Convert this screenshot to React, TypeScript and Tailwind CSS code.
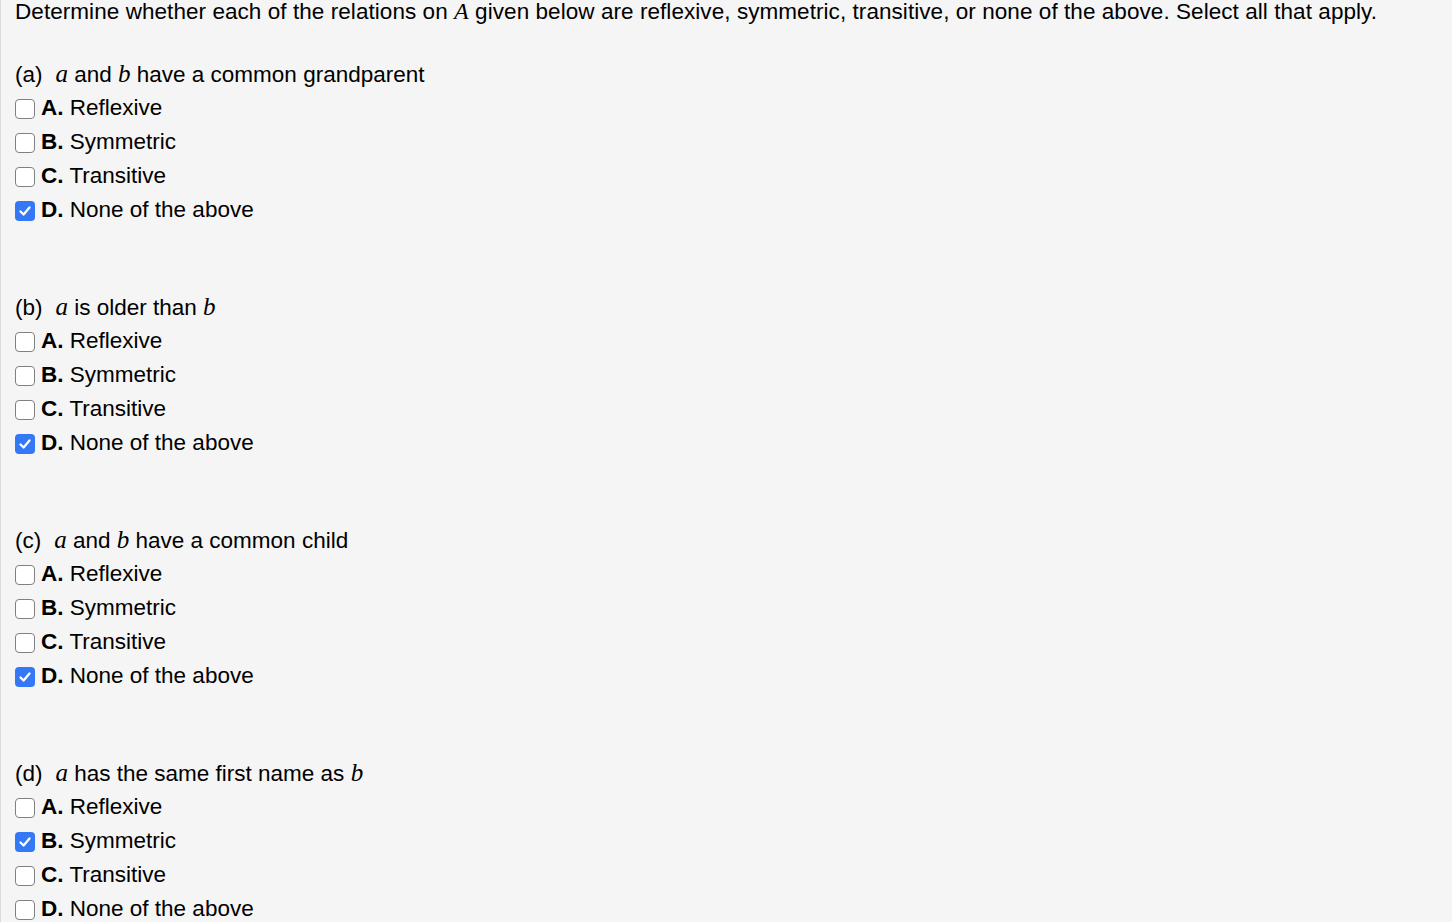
import React from 'react'

type Part = { q: string; rest: React.ReactNode; checked: string[] }

function M({ children, size = 'text-[25px]' }: { children: React.ReactNode; size?: string }) {
  return (
    <span className={`italic leading-none ${size}`} style={{ fontFamily: '"Liberation Serif", "DejaVu Serif", serif' }}>
      {children}
    </span>
  )
}

function Box({ checked }: { checked: boolean }) {
  if (checked) {
    return (
      <span className="w-[20px] h-[20px] mt-[2px] rounded-[4px] bg-[#3478f6] flex items-center justify-center shrink-0">
        <svg width="14" height="14" viewBox="0 0 14 14" fill="none">
          <path d="M2.5 7.5 L5.6 10.5 L11.5 3.5" stroke="white" strokeWidth="2.3" strokeLinecap="round" strokeLinejoin="round" />
        </svg>
      </span>
    )
  }
  return <span className="w-[20px] h-[20px] mt-[2px] rounded-[4px] bg-white border border-[#808080] shrink-0" />
}

const options = [
  ['A', 'Reflexive'],
  ['B', 'Symmetric'],
  ['C', 'Transitive'],
  ['D', 'None of the above'],
]

const parts: Part[] = [
  { q: '(a)', rest: <><M>a</M> and <M>b</M> have a common grandparent</>, checked: ['D'] },
  { q: '(b)', rest: <><M>a</M> is older than <M>b</M></>, checked: ['D'] },
  { q: '(c)', rest: <><M>a</M> and <M>b</M> have a common child</>, checked: ['D'] },
  { q: '(d)', rest: <><M>a</M> has the same first name as <M>b</M></>, checked: ['B'] },
]

export default function App() {
  return (
    <div
      className="min-h-[922px] bg-[#f5f5f5] border-l border-[#dcdcdc] text-[22.5px] text-black pl-[14px]"
      style={{ fontFamily: '"Liberation Sans", Helvetica, Arial, sans-serif' }}
    >
      <p className="h-[24px] -mt-[1px] leading-[24px] whitespace-nowrap tracking-[0.06px]">
        Determine whether each of the relations on <M size="text-[24px]">A</M> given below are reflexive, symmetric, transitive, or none of the above. Select all that apply.
      </p>
      <div className="mt-[37px] flex flex-col gap-[67px]">
        {parts.map((p) => (
          <div key={p.q}>
            <div className="h-[30px] flex items-center whitespace-nowrap">
              <span>{p.q}</span>
              <span className="ml-[13px]">{p.rest}</span>
            </div>
            {options.map(([k, label]) => (
              <div key={k} className="h-[34px] pt-[1px] flex items-center gap-[6px]">
                <Box checked={p.checked.includes(k)} />
                <span>
                  <b>{k}.</b> {label}
                </span>
              </div>
            ))}
          </div>
        ))}
      </div>
    </div>
  )
}
